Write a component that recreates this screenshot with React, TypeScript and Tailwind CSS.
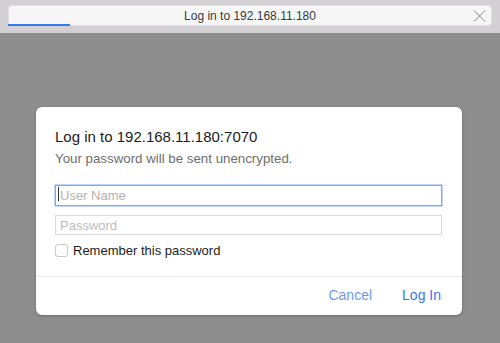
import { X } from "lucide-react";

export default function App() {
  return (
    <div
      className="w-[500px] h-[343px] flex flex-col overflow-hidden"
      style={{ fontFamily: '"Liberation Sans", Arial, sans-serif' }}
    >
      {/* Window title bar */}
      <div className="h-[33px] shrink-0 bg-[#d2d0d2] px-[8px] pt-[5px]">
        <div className="relative h-[21px] rounded-[4px] bg-[#f6f6f6] border border-[#e2e0e2] flex items-center justify-center">
          <span className="text-[12px] text-[#3a3a3a]">Log in to 192.168.11.180</span>
          <X size={21} strokeWidth={1} className="absolute right-[1px] top-1/2 -translate-y-1/2 text-[#707070]" />
          <div className="absolute left-[-1px] bottom-[-1px] w-[62px] h-[2px] bg-[#3a76f0]" />
        </div>
      </div>

      {/* Page area */}
      <div className="flex-1 bg-[#8e8e8e] pt-[74px] pl-[36px]">
        <div className="w-[426px] h-[208px] bg-white rounded-[6px] shadow-[0_1px_3px_rgba(0,0,0,0.25)] flex flex-col">
          <div className="flex-1 pl-[19px] pr-[20px] pt-[21px]">
            <h1 className="text-[15px] leading-[18px] text-[#1c1c1c]">Log in to 192.168.11.180:7070</h1>
            <p className="mt-[5px] text-[13.3px] leading-[16px] text-[#6e6e6e]">
              Your password will be sent unencrypted.
            </p>

            <div className="relative mt-[16px]">
              <input
                type="text"
                placeholder="User Name"
                className="w-full h-[21px] border border-[#7ea8f5] shadow-[0_0_0_0.5px_#7ea8f5] px-[4px] text-[13px] text-[#222] placeholder-[#b3b3b3] outline-none"
              />
              <span className="absolute left-[3px] top-[4px] w-px h-[14px] bg-[#333]" />
            </div>

            <input
              type="password"
              placeholder="Password"
              className="mt-[8px] w-full h-[20px] border border-[#dadada] px-[4px] text-[13px] text-[#222] placeholder-[#bdbdbd] outline-none"
            />

            <label className="mt-[6px] flex items-center gap-[5px]">
              <span className="w-[13px] h-[13px] rounded-[3px] border border-[#c9c9c9] bg-white" />
              <span className="text-[13px] leading-[16px] text-[#1c1c1c]">Remember this password</span>
            </label>
          </div>

          <div className="h-[39px] border-t border-[#e8e8e8] flex items-center justify-end gap-[30px] pr-[21px] pb-[1px]">
            <button className="text-[14px] text-[#6f9bef]">Cancel</button>
            <button className="text-[14px] text-[#3b78e9]">Log In</button>
          </div>
        </div>
      </div>
    </div>
  );
}
